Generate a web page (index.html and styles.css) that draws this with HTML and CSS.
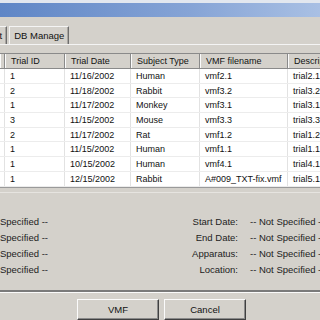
FILE: index.html
```
<!DOCTYPE html>
<html lang="en">
<head>
    <meta charset="UTF-8">
    <title>Trial Browser</title>
    <link rel="stylesheet" href="styles.css">
</head>
<body>
<div class="window">
    <div class="titlebar"></div>
    <div class="tabstrip">
        <div class="tab tab-cut">Trial Edit</div>
        <div class="tab">DB Manage</div>
    </div>
    <div class="panel">
        <div class="grid">
            <div class="row head">
                <div class="cell"></div>
                <div class="cell">Trial ID</div>
                <div class="cell">Trial Date</div>
                <div class="cell">Subject Type</div>
                <div class="cell">VMF filename</div>
                <div class="cell">Description</div>
            </div>
            <div class="row"><div class="cell"></div><div class="cell">1</div><div class="cell">11/16/2002</div><div class="cell">Human</div><div class="cell">vmf2.1</div><div class="cell">trial2.1</div></div>
            <div class="row"><div class="cell"></div><div class="cell">2</div><div class="cell">11/18/2002</div><div class="cell">Rabbit</div><div class="cell">vmf3.2</div><div class="cell">trial3.2</div></div>
            <div class="row"><div class="cell"></div><div class="cell">1</div><div class="cell">11/17/2002</div><div class="cell">Monkey</div><div class="cell">vmf3.1</div><div class="cell">trial3.1</div></div>
            <div class="row"><div class="cell"></div><div class="cell">3</div><div class="cell">11/15/2002</div><div class="cell">Mouse</div><div class="cell">vmf3.3</div><div class="cell">trial3.3</div></div>
            <div class="row"><div class="cell"></div><div class="cell">2</div><div class="cell">11/17/2002</div><div class="cell">Rat</div><div class="cell">vmf1.2</div><div class="cell">trial1.2</div></div>
            <div class="row"><div class="cell"></div><div class="cell">1</div><div class="cell">11/15/2002</div><div class="cell">Human</div><div class="cell">vmf1.1</div><div class="cell">trial1.1</div></div>
            <div class="row"><div class="cell"></div><div class="cell">1</div><div class="cell">10/15/2002</div><div class="cell">Human</div><div class="cell">vmf4.1</div><div class="cell">trial4.1</div></div>
            <div class="row"><div class="cell"></div><div class="cell">1</div><div class="cell">12/15/2002</div><div class="cell">Rabbit</div><div class="cell">A#009_TXT-fix.vmf</div><div class="cell">trial5.1</div></div>
        </div>

        <div class="info">
            <div class="left">-- Not Specified --</div>
            <div class="label">Start Date:</div>
            <div class="value">-- Not Specified --</div>
            <div class="left">-- Not Specified --</div>
            <div class="label">End Date:</div>
            <div class="value">-- Not Specified --</div>
            <div class="left">-- Not Specified --</div>
            <div class="label">Apparatus:</div>
            <div class="value">-- Not Specified --</div>
            <div class="left">-- Not Specified --</div>
            <div class="label">Location:</div>
            <div class="value">-- Not Specified --</div>
        </div>
    </div>
    <div class="buttons">
        <button class="button">VMF</button>
        <button class="button">Cancel</button>
    </div>
</div>
</body>
</html>
```

FILE: styles.css
```
body {
    margin: 0;
    padding: 0;
    background-color: #d4d1cb;
    font-family: 'Liberation Sans', Arial, sans-serif;
    font-size: 9px;
    color: #111;
}
.window {
    width: 320px;
    height: 320px;
    overflow: hidden;
}
.titlebar {
    height: 14px;
    border-top: 3px solid #e2e7ef;
    background: linear-gradient(to right, #5f86c6, #86a4d6 60%, #a9c0e4);
}
.tabstrip {
    height: 27px;
    display: flex;
    align-items: flex-end;
    border-bottom: 1px solid #f4f4f4;
}
.tab {
    height: 17px;
    line-height: 17px;
    padding: 0 4px;
    margin-right: 2px;
    border-top: 1px solid #f4f4f4;
    border-left: 1px solid #f4f4f4;
    border-right: 1px solid #6e6e6e;
    box-shadow: inset -1px 0 #a8a5a0;
    font-size: 9.5px;
}
.tab-cut {
    margin-left: -40px;
}
.panel {
    padding-top: 8px;
}
.grid {
    border-top: 1px solid #8a8a8a;
    border-bottom: 1px solid #9a9a9a;
    background: #fff;
    overflow: hidden;
}
.row {
    display: grid;
    grid-template-columns: 5px 60px 66px 69px 88px 80px;
    height: 14.7px;
    line-height: 14.7px;
    border-bottom: 1px solid #ececec;
    box-sizing: border-box;
}
.row .cell {
    padding-left: 5px;
    border-right: 1px solid #e2e2e2;
    white-space: nowrap;
    overflow: hidden;
}
.row.head {
    height: 15px;
    line-height: 15px;
    background: #d4d1cb;
    border-bottom: 1px solid #8a8a8a;
}
.row.head .cell {
    border-right: 1px solid #8a8a8a;
    box-shadow: inset 1px 0 #fbfbfb;
    padding-left: 6px;
}
.row .cell:first-child {
    padding-left: 0;
}
.info {
    margin-top: 4px;
    border-top: 1px solid #e6e4e0;
    padding-top: 21px;
    display: grid;
    grid-template-columns: 48px 190px 82px;
    grid-auto-rows: 16.3px;
    line-height: 16.3px;
    font-size: 9.5px;
    height: 76px;
    color: #222;
}
.left {
    text-align: right;
    white-space: nowrap;
    overflow: hidden;
    direction: rtl;
}
.label {
    text-align: right;
}
.value {
    padding-left: 12px;
    white-space: nowrap;
}
.buttons {
    border-top: 2px solid #7a7a7a;
    box-shadow: inset 0 1px #fafafa;
    padding: 7px 0 0 77px;
    display: flex;
    gap: 5px;
}
.button {
    width: 82px;
    height: 21px;
    background: #d4d1cb;
    font-family: 'Liberation Sans', Arial, sans-serif;
    font-size: 9.5px;
    color: #111;
    border: 1px solid;
    border-color: #fbfbfb #404040 #404040 #fbfbfb;
    box-shadow: inset -1px -1px #8a8a8a;
    padding: 0;
}
```
